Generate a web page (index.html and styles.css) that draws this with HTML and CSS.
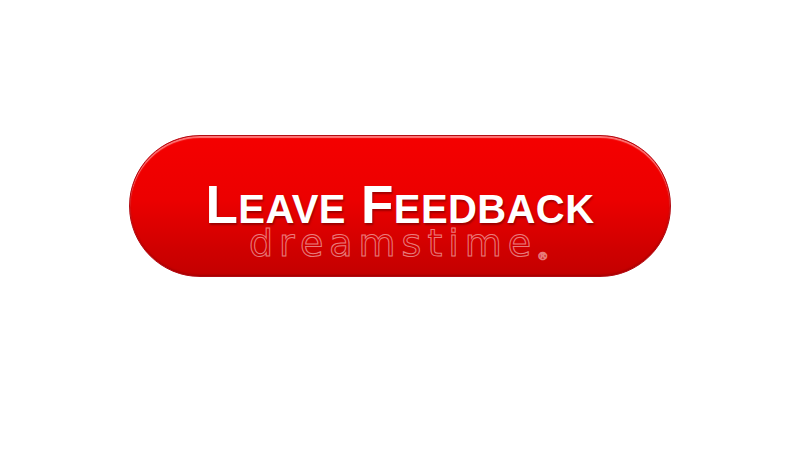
FILE: index.html
```html
<!DOCTYPE html>
<html lang="en">
<head>
<meta charset="UTF-8" />
<meta name="viewport" content="width=device-width, initial-scale=1.0" />
<title>Leave Feedback</title>
<link rel="stylesheet" href="styles.css">
</head>
<body>
    <div class="stage">
        <button class="pill">
            <span class="label"><span class="cap">L</span><span class="low">eave</span> <span class="cap">F</span><span class="low">eedback</span></span>
        </button>
        <div class="watermark">dreamstime<sup>®</sup></div>
    </div>
</body>
</html>
```

FILE: styles.css
```css
body {
    margin: 0;
    background: #fff;
    font-family: "Liberation Sans", Arial, sans-serif;
}
.stage {
    position: relative;
    width: 542px;
    margin: 135px auto 0;
}
.pill {
    display: flex;
    align-items: center;
    justify-content: center;
    width: 542px;
    height: 142px;
    padding: 0 0 3px;
    border: 1px solid #b30a12;
    border-radius: 71px;
    background: linear-gradient(#f50000 0%, #ec0000 45%, #d00000 80%, #c30000 100%);
    box-shadow: inset 0 2px 1px rgba(255,160,160,0.75), inset 0 -1px 2px rgba(110,0,0,0.4);
    color: #fff;
    font-family: inherit;
    font-weight: bold;
    cursor: pointer;
}
.label {
    font-size: 53px;
    line-height: 1;
    text-transform: uppercase;
    letter-spacing: 0.4px;
    text-shadow: 1px 2px 2px rgba(90,0,0,0.5);
    white-space: nowrap;
}
.low {
    font-size: 40px;
}
.watermark {
    position: absolute;
    left: 120px;
    top: 86px;
    font-family: "DejaVu Sans", sans-serif;
    font-size: 38px;
    letter-spacing: 6px;
    color: transparent;
    -webkit-text-stroke: 1px rgba(255,230,230,0.55);
    pointer-events: none;
}
.watermark sup {
    font-size: 11px;
    letter-spacing: 0;
    vertical-align: -4px;
}
```
